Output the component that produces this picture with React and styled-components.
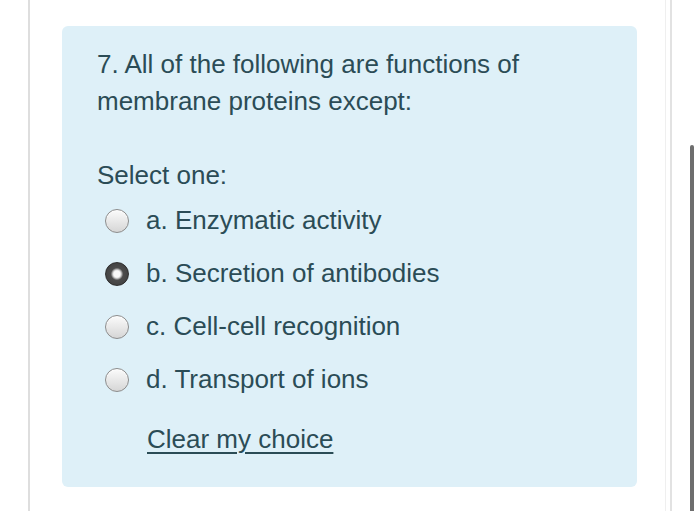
import React from "react";
import styled, { createGlobalStyle } from "styled-components";

const Global = createGlobalStyle`
  html, body { margin: 0; padding: 0; background: #ffffff; }
  body { font-family: "Liberation Sans", Arial, sans-serif; }
`;

const Page = styled.div`
  position: relative;
  width: 700px;
  height: 511px;
  overflow: hidden;
  background: #fff;
`;

const Frame = styled.div`
  margin-left: 28px;
  width: 644px;
  height: 511px;
  border-left: 2px solid #dedede;
  border-right: 2px solid #e2e2e2;
  box-sizing: border-box;
`;

const Column = styled.div`
  width: 636px;
  height: 100%;
  border-right: 1px solid #efefef;
  box-sizing: border-box;
  padding: 26px 0 0 32px;
`;

const Card = styled.div`
  width: 575px;
  height: 461px;
  box-sizing: border-box;
  background: #def0f8;
  border-radius: 6px;
  padding: 20px 20px 0 35px;
  color: #2b4c56;
`;

const Question = styled.div`
  font-size: 26px;
  line-height: 37px;
`;

const Prompt = styled.div`
  margin-top: 37px;
  font-size: 26px;
  line-height: 37px;
`;

const Options = styled.div`
  margin-top: 8px;
  display: flex;
  flex-direction: column;
  gap: 16px;
`;

const Option = styled.label`
  display: flex;
  align-items: center;
  gap: 17px;
  height: 37px;
  padding-left: 8px;
  font-size: 26px;
`;

const Radio = styled.span`
  width: 24px;
  height: 24px;
  border-radius: 50%;
  box-sizing: border-box;
  flex: none;
  border: ${(p) => (p.checked ? "1px solid #2e2e2e" : "1.5px solid #8c8c8c")};
  box-shadow: ${(p) => (p.checked ? "none" : "inset 0 1px 1px rgba(255,255,255,0.9)")};
  background: ${(p) =>
    p.checked
      ? "radial-gradient(circle, #f8f8f8 0 3.2px, #cfcfcf 4.2px, #8e8e8e 5.2px, #4c4c4c 6.2px, #3a3a3a 100%)"
      : "linear-gradient(#fbfbfb, #d6d6d6)"};
`;

const Clear = styled.a`
  display: inline-block;
  margin-top: 23px;
  margin-left: 50px;
  font-size: 26px;
  line-height: 37px;
  color: #2b4c56;
  text-decoration: underline;
  text-underline-offset: 4px;
  text-decoration-thickness: 2px;
`;

const Scrollbar = styled.div`
  position: absolute;
  left: 690px;
  top: 145px;
  width: 4px;
  height: 380px;
  border-radius: 2px;
  background: #6e6e6e;
`;

const options = [
  { id: "a", text: "a. Enzymatic activity" },
  { id: "b", text: "b. Secretion of antibodies", checked: true },
  { id: "c", text: "c. Cell-cell recognition" },
  { id: "d", text: "d. Transport of ions" },
];

export default function App() {
  return (
    <Page>
      <Global />
      <Frame>
        <Column>
          <Card>
            <Question>
              7. All of the following are functions of
              <br />
              membrane proteins except:
            </Question>
            <Prompt>Select one:</Prompt>
            <Options>
              {options.map((o) => (
                <Option key={o.id}>
                  <Radio checked={o.checked} />
                  {o.text}
                </Option>
              ))}
            </Options>
            <Clear>Clear my choice</Clear>
          </Card>
        </Column>
      </Frame>
      <Scrollbar />
    </Page>
  );
}
